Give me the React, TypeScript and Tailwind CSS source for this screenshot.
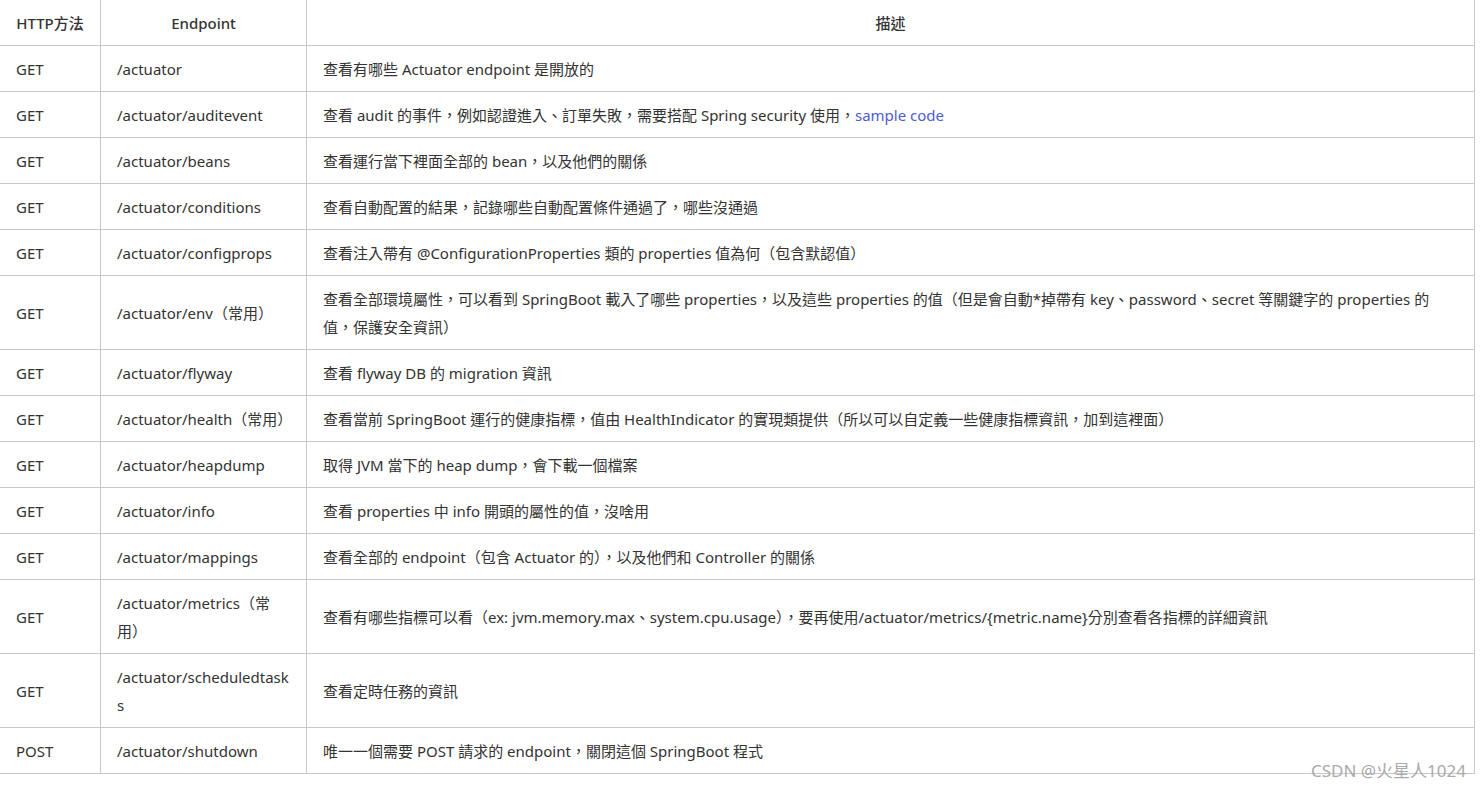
const rows: [string, string, React.ReactNode][] = [
  ["GET", "/actuator", "查看有哪些 Actuator endpoint 是開放的"],
  [
    "GET",
    "/actuator/auditevent",
    <>
      查看 audit 的事件，例如認證進入、訂單失敗，需要搭配 Spring security 使用，
      <a className="text-[#4e5bd6]">sample code</a>
    </>,
  ],
  ["GET", "/actuator/beans", "查看運行當下裡面全部的 bean，以及他們的關係"],
  ["GET", "/actuator/conditions", "查看自動配置的結果，記錄哪些自動配置條件通過了，哪些沒通過"],
  ["GET", "/actuator/configprops", "查看注入帶有 @ConfigurationProperties 類的 properties 值為何（包含默認值）"],
  [
    "GET",
    "/actuator/env（常用）",
    "查看全部環境屬性，可以看到 SpringBoot 載入了哪些 properties，以及這些 properties 的值（但是會自動*掉帶有 key、password、secret 等關鍵字的 properties 的值，保護安全資訊）",
  ],
  ["GET", "/actuator/flyway", "查看 flyway DB 的 migration 資訊"],
  ["GET", "/actuator/health（常用）", "查看當前 SpringBoot 運行的健康指標，值由 HealthIndicator 的實現類提供（所以可以自定義一些健康指標資訊，加到這裡面）"],
  ["GET", "/actuator/heapdump", "取得 JVM 當下的 heap dump，會下載一個檔案"],
  ["GET", "/actuator/info", "查看 properties 中 info 開頭的屬性的值，沒啥用"],
  ["GET", "/actuator/mappings", "查看全部的 endpoint（包含 Actuator 的），以及他們和 Controller 的關係"],
  [
    "GET",
    "/actuator/metrics（常用）",
    "查看有哪些指標可以看（ex: jvm.memory.max、system.cpu.usage），要再使用/actuator/metrics/{metric.name}分別查看各指標的詳細資訊",
  ],
  ["GET", "/actuator/scheduledtasks", "查看定時任務的資訊"],
  ["POST", "/actuator/shutdown", "唯一一個需要 POST 請求的 endpoint，關閉這個 SpringBoot 程式"],
];

export default function App() {
  const cell = "border border-[#c8c8c8] px-4 py-[8.5px] align-middle";
  return (
    <div
      className="relative w-[1480px] h-[793px] overflow-hidden bg-white text-[15px] leading-[28px] text-[#333]"
      style={{ fontFamily: '"Noto Sans", "Noto Sans CJK TC", sans-serif' }}
    >
      <table className="border-collapse w-[1476px] -mt-px -ml-px table-fixed">
        <colgroup>
          <col className="w-[101px]" />
          <col className="w-[206px]" />
          <col />
        </colgroup>
        <thead>
          <tr>
            <th className={`${cell} font-medium text-center py-[5.5px]`}>HTTP方法</th>
            <th className={`${cell} font-medium text-center py-[5.5px]`}>Endpoint</th>
            <th className={`${cell} font-medium text-center py-[5.5px]`}>描述</th>
          </tr>
        </thead>
        <tbody>
          {rows.map(([m, e, d], i) => (
            <tr key={i}>
              <td className={cell}>{m}</td>
              <td className={`${cell} break-all`}>{e}</td>
              <td className={cell}>{d}</td>
            </tr>
          ))}
        </tbody>
      </table>
      <div className="absolute right-[14px] bottom-[8px] text-[17px] text-[#aaa]">CSDN @火星人1024</div>
    </div>
  );
}
